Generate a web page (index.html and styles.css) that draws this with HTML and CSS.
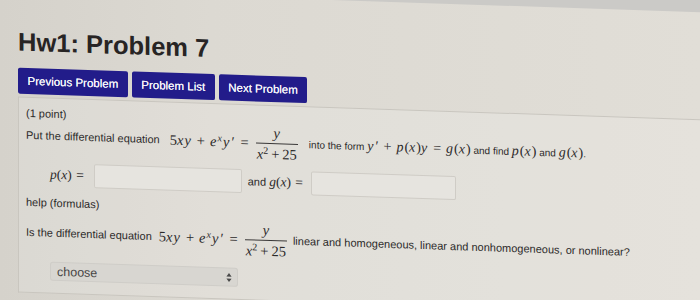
FILE: index.html
```html
<!DOCTYPE html>
<html>
<head>
<meta charset="utf-8">
<title>Hw1: Problem 7</title>
<link rel="stylesheet" href="styles.css">
</head>
<body>
<div class="page">
  <div class="topband"></div>
  <div class="content">
    <h1 class="title">Hw1: Problem 7</h1>
    <div class="nav">
      <span class="btn">Previous Problem</span>
      <span class="btn">Problem List</span>
      <span class="btn">Next Problem</span>
    </div>
    <div class="problem">
      <p class="points">(1 point)</p>
      <div class="eqrow">
        <span class="txt">Put the differential equation</span>
        <span class="m lhs">5<i>x</i><i>y</i><span class="bin">+</span><i>e</i><sup><i>x</i></sup><i>y</i><span class="pr">′</span><span class="rel">=</span></span>
        <span class="frac"><span class="num"><i>y</i></span><span class="den"><i>x</i><sup>2</sup><span class="bin">+</span>25</span></span>
        <span class="txt small after">into the form <span class="mi"><i>y</i><span class="pr">′</span><span class="bin">+</span><i>p</i>(<i>x</i>)<i>y</i><span class="rel">=</span><i>g</i>(<i>x</i>)</span> and find <span class="mi"><i>p</i>(<i>x</i>)</span> and <span class="mi"><i>g</i>(<i>x</i>)</span>.</span>
      </div>
      <div class="ansrow">
        <span class="lbl"><i>p</i>(<i>x</i>) <span class="eq">=</span></span>
        <span class="ans"></span>
        <span class="and">and <span class="lbl"><i>g</i>(<i>x</i>) <span class="eq">=</span></span></span>
        <span class="ans ans2"></span>
      </div>
      <p class="help">help (formulas)</p>
      <div class="eqrow eqrow2">
        <span class="txt">Is the differential equation</span>
        <span class="m lhs">5<i>x</i><i>y</i><span class="bin">+</span><i>e</i><sup><i>x</i></sup><i>y</i><span class="pr">′</span><span class="rel">=</span></span>
        <span class="frac"><span class="num"><i>y</i></span><span class="den"><i>x</i><sup>2</sup><span class="bin">+</span>25</span></span>
        <span class="txt after2">linear and homogeneous, linear and nonhomogeneous, or nonlinear?</span>
      </div>
      <div class="sel">
        <span>choose</span>
        <svg class="arrows" width="6" height="10" viewBox="0 0 6 10"><path d="M3 0.5 L5.6 4 H0.4 Z M3 9.5 L5.6 6 H0.4 Z" fill="#4a4a4a"/></svg>
      </div>
    </div>
  </div>
</div>
</body>
</html>
```
FILE: styles.css
```css
html, body {
  margin: 0;
  height: 100%;
}
body {
  background: linear-gradient(90deg, #d5d2cb 0%, #dcd9d2 30%, #e1ded7 100%);
  overflow: hidden;
  font-family: "Liberation Sans", Arial, sans-serif;
  color: #2c2a2a;
}
.page {
  display: flow-root;
  transform: skewY(1.9deg);
  transform-origin: 0 0;
}
.topband {
  height: 20px;
  margin-top: -31px;
  background: #cbcac7;
}
.content {
  padding-left: 18px;
}
.title {
  margin: 37px 0 0;
  font-size: 25.5px;
  line-height: 30px;
  font-weight: bold;
  color: #272424;
}
.nav {
  display: flex;
  gap: 4px;
  margin-top: 11px;
}
.btn {
  display: flex;
  align-items: center;
  height: 26px;
  padding: 0 9.5px;
  background: #221c8a;
  color: #f4f4fa;
  font-size: 11.5px;
  border-radius: 2px;
  white-space: nowrap;
  text-shadow: 0 0 0.4px #fff;
}
.problem {
  margin-top: 3px;
  border: 1px solid #c9c6bf;
  border-right: 0;
  background: rgba(255, 255, 255, 0.14);
  padding: 7px 0 12px 7px;
}
.points {
  margin: 0;
  font-size: 11px;
  line-height: 16px;
}
.eqrow {
  display: flex;
  align-items: center;
  height: 28px;
  white-space: nowrap;
  font-size: 11px;
}
.m, .frac, .mi, .lbl {
  font-family: "Liberation Serif", "Times New Roman", serif;
}
.m {
  font-size: 14.5px;
  margin-left: 10px;
  line-height: 16px;
}
.m i, .mi i {
  margin-right: 1px;
}
.eqrow2 .m {
  margin-left: 7px;
}
.bin {
  margin: 0 5px;
}
.rel {
  margin: 0 6px;
}
.pr {
  margin-left: 1px;
}
sup {
  font-size: 10px;
  vertical-align: 5px;
  line-height: 0;
}
.frac {
  display: inline-flex;
  flex-direction: column;
  align-items: stretch;
  font-size: 14.5px;
  margin-left: 1px;
  text-align: center;
}
.frac .bin {
  margin: 0 3px;
}
.num {
  line-height: 14px;
  padding: 0 1px 3px;
  border-bottom: 1px solid #3a3838;
}
.den {
  line-height: 14px;
  padding: 3px 1px 0;
}
.after {
  margin-left: 11px;
}
.after2 {
  margin-left: 6px;
}
.small {
  font-size: 10px;
}
.mi {
  font-size: 14px;
}
.mi .bin, .mi .rel {
  margin: 0 5px;
}
.ansrow {
  display: flex;
  align-items: center;
  height: 24px;
  margin-top: 13px;
  padding-left: 24px;
}
.lbl {
  font-size: 13.5px;
}
.eq {
  margin-left: 1px;
}
.ans {
  width: 148px;
  height: 24px;
  box-sizing: border-box;
  margin-left: 10px;
  background: #e6e4df;
  border: 1px solid #cfccc6;
  border-radius: 2px;
}
.ans2 {
  width: 145px;
  margin-left: 8px;
}
.and {
  margin-left: 6px;
  font-size: 11px;
}
.help {
  margin: 8px 0 0;
  font-size: 11px;
  line-height: 16px;
}
.eqrow2 {
  margin-top: 8px;
}
.sel {
  display: flex;
  align-items: center;
  justify-content: space-between;
  width: 188px;
  height: 19px;
  box-sizing: border-box;
  margin: 15px 0 0 24px;
  padding: 0 5px 0 6px;
  background: #d8d6d1;
  border: 1px solid #cfcdc8;
  border-radius: 3px;
  font-size: 12.5px;
  color: #474545;
}
.arrows {
  display: block;
}
```
